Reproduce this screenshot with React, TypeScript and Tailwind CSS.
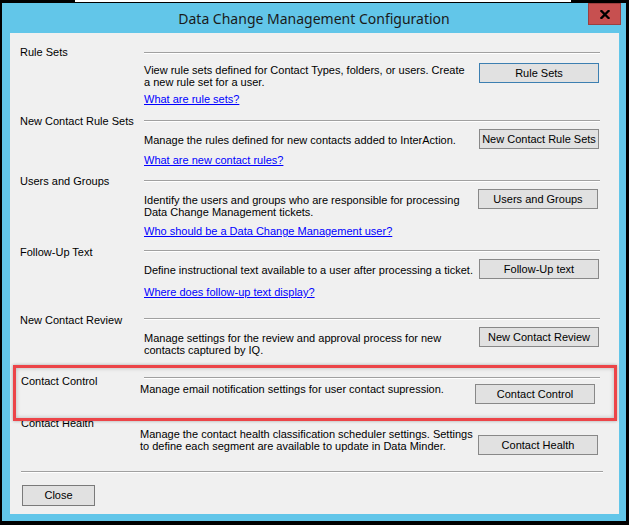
import React from 'react';

interface WinButtonProps {
  children: React.ReactNode;
  className?: string;
  focused?: boolean;
}

const WinButton: React.FC<WinButtonProps> = ({ children, className = '', focused = false }) => (
  <button
    type="button"
    className={`h-[20px] w-[120px] shrink-0 border bg-[#e1e1e1] text-[11px] leading-[18px] text-black ${
      focused ? 'border-[#3c7fb1]' : 'border-[#888888]'
    } ${className}`}
  >
    {children}
  </button>
);

interface SectionProps {
  label: string;
  desc: React.ReactNode;
  button: string;
  link?: string;
  height: string;
  labelCls: string;
  descCls: string;
  linkCls?: string;
  btnCls: string;
  focused?: boolean;
}

const Section: React.FC<SectionProps> = ({
  label,
  desc,
  button,
  link,
  height,
  labelCls,
  descCls,
  linkCls = '',
  btnCls,
  focused,
}) => (
  <div className={`flex items-start ${height}`}>
    <div className={`w-[134px] shrink-0 leading-[13px] ${labelCls}`}>{label}</div>
    <div className="w-[456px]">
      {/* etched separator */}
      <div className="h-px bg-[#a0a0a0]" />
      <div className="h-px bg-white" />
      <div className="flex items-start justify-between">
        <div className={descCls}>
          <p className="whitespace-nowrap leading-[12px]">{desc}</p>
          {link && (
            <a href="#" className={`block whitespace-nowrap leading-[13px] text-[#0000ff] underline ${linkCls}`}>
              {link}
            </a>
          )}
        </div>
        <WinButton className={btnCls} focused={focused}>
          {button}
        </WinButton>
      </div>
    </div>
  </div>
);

export default function App() {
  return (
    <div className="h-[525px] w-[629px] overflow-hidden bg-black font-['Liberation_Sans',Arial,sans-serif] text-[11px] text-black">
      {/* strip of the window behind */}
      <div className="h-[3px]">
        <div className="ml-[75px] h-[2px] w-[496px] bg-white" />
      </div>

      {/* window frame */}
      <div className="ml-[2px] flex h-[518px] w-[624px] flex-col bg-[#62c6e9]">
        {/* title bar */}
        <div className="relative h-[30px] shrink-0">
          <div className="pt-[1px] text-center font-['Noto_Sans',sans-serif] text-[14px] leading-[29px] text-[#1a1a1a]">
            Data Change Management Configuration
          </div>
          <div className="absolute right-[5px] top-0 flex h-[22px] w-[33px] items-center justify-center border border-[#9c3f3f] bg-[#c75050]">
            <svg width="10" height="9" viewBox="0 0 10 9">
              <path d="M1.5 1 L8.5 8 M8.5 1 L1.5 8" stroke="#000" strokeWidth="2.3" strokeLinecap="square" />
            </svg>
          </div>
        </div>

        {/* client area */}
        <div className="relative ml-[8px] h-[481px] w-[609px] bg-[#f0f0f0] pt-[19px]">
          <Section
            label="Rule Sets"
            desc={
              <>
                View rule sets defined for Contact Types, folders, or users. Create
                <br />a new rule set for a user.
              </>
            }
            button="Rule Sets"
            link="What are rule sets?"
            height="h-[68px]"
            labelCls="-mt-[6.5px] pl-[10px]"
            descCls="mt-[10px]"
            linkCls="mt-[4.5px]"
            btnCls="mt-[9px] mr-[1px]"
            focused
          />
          <Section
            label="New Contact Rule Sets"
            desc="Manage the rules defined for new contacts added to InterAction."
            button="New Contact Rule Sets"
            link="What are new contact rules?"
            height="h-[60px]"
            labelCls="-mt-[5.5px] pl-[10px]"
            descCls="mt-[12px]"
            linkCls="mt-[8px]"
            btnCls="mt-[7px] mr-[1px]"
          />
          <Section
            label="Users and Groups"
            desc={
              <>
                Identify the users and groups who are responsible for processing
                <br />
                Data Change Management tickets.
              </>
            }
            button="Users and Groups"
            link="Who should be a Data Change Management user?"
            height="h-[70px]"
            labelCls="-mt-[5.5px] pl-[10px]"
            descCls="mt-[12px]"
            linkCls="mt-[7px]"
            btnCls="mt-[7px] mr-[2px]"
          />
          <Section
            label="Follow-Up Text"
            desc="Define instructional text available to a user after processing a ticket."
            button="Follow-Up text"
            link="Where does follow-up text display?"
            height="h-[68px]"
            labelCls="-mt-[4.5px] pl-[10px]"
            descCls="mt-[12px]"
            linkCls="mt-[10px]"
            btnCls="mt-[7px] mr-[1px]"
          />
          <Section
            label="New Contact Review"
            desc={
              <>
                Manage settings for the review and approval process for new
                <br />
                contacts captured by IQ.
              </>
            }
            button="New Contact Review"
            height="h-[59px]"
            labelCls="-mt-[4px] pl-[10px]"
            descCls="mt-[12px]"
            btnCls="mt-[7px] mr-[1px]"
          />
          <Section
            label="Contact Control"
            desc="Manage email notification settings for user contact supression."
            button="Contact Control"
            height="h-[42px]"
            labelCls="-mt-[2.5px] pl-[11px]"
            descCls="mt-[4px] -ml-[4px]"
            btnCls="mt-[5px] mr-[5px]"
          />
          <Section
            label="Contact Health"
            desc={
              <>
                Manage the contact health classification scheduler settings. Settings
                <br />
                to define each segment are available to update in Data Minder.
              </>
            }
            button="Contact Health"
            height="h-[52px]"
            labelCls="-mt-[2.5px] pl-[11px]"
            descCls="mt-[7px] -ml-[4px]"
            btnCls="mt-[14px] mr-[2px]"
          />

          {/* bottom separator */}
          <div className="ml-[11px] w-[582px]">
            <div className="h-px bg-[#a0a0a0]" />
            <div className="h-px bg-white" />
          </div>
          <button
            type="button"
            className="ml-[12px] mt-[12px] h-[21px] w-[73px] border border-[#7a7a7a] bg-[#e1e1e1] text-[11px] leading-[19px] text-black"
          >
            Close
          </button>

          {/* red highlight annotation */}
          <div className="pointer-events-none absolute left-[3px] top-[332px] h-[56px] w-[604px] border-[3px] border-[#ec4448] shadow-[inset_0_0_4px_rgba(0,0,0,0.25),0_0_3px_rgba(0,0,0,0.3)]" />
        </div>
      </div>
    </div>
  );
}
